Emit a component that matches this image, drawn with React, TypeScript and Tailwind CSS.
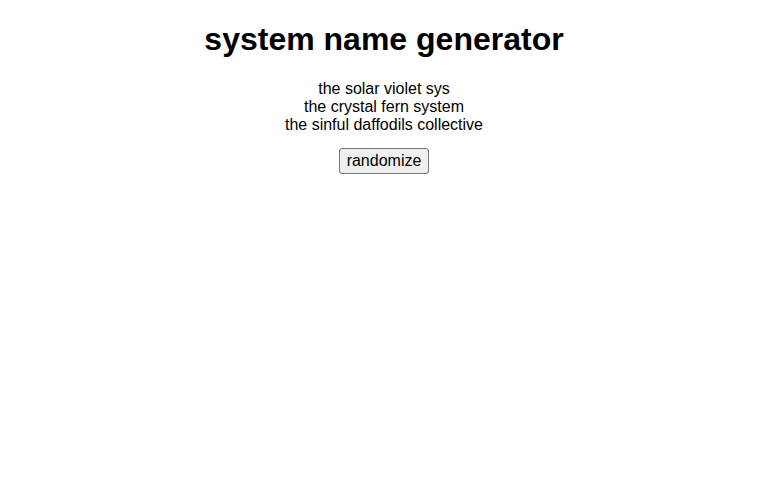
export default function App() {
  const names = [
    "the solar violet sys",
    "the crystal fern system",
    "the sinful daffodils collective",
  ];
  return (
    <div className="min-h-[480px] bg-white text-black text-center font-['Liberation_Sans',Arial,sans-serif] pt-[21.44px]">
      <h1 className="text-[32px] font-bold leading-[normal] mb-[21.44px]">system name generator</h1>
      <div className="text-[16px] leading-[18px] mb-[14px]">
        {names.map((n) => (
          <div key={n}>{n}</div>
        ))}
      </div>
      <button className="text-[16px] leading-[normal] px-[7px] py-[3px] border border-[#767676] rounded-[3px] bg-[#efefef] text-black">
        randomize
      </button>
    </div>
  );
}
